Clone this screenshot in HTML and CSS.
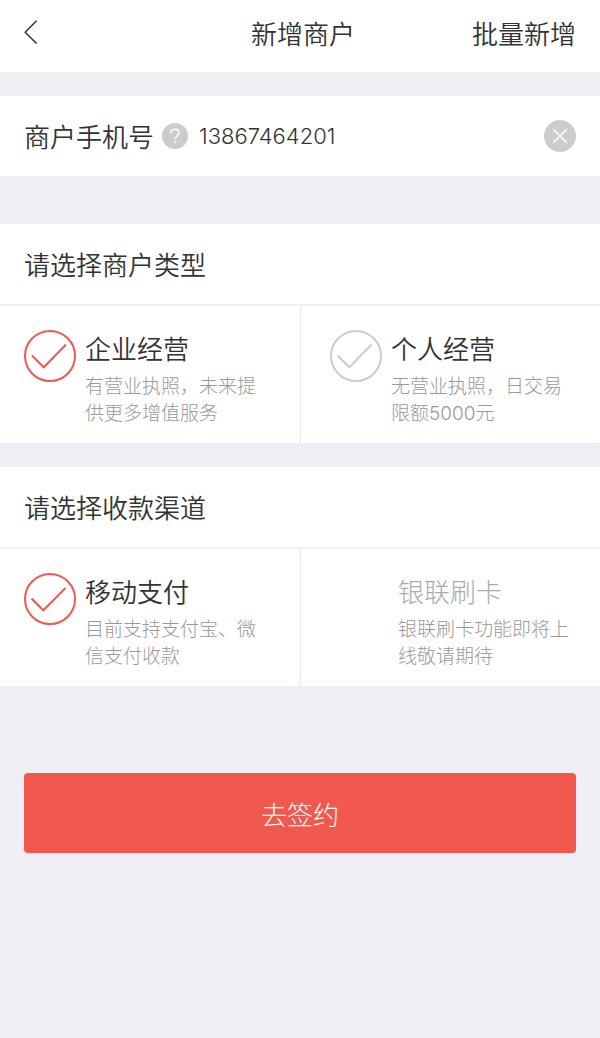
FILE: index.html
```html
<!DOCTYPE html>
<html lang="zh-CN">
<head>
<meta charset="utf-8">
<meta name="viewport" content="width=device-width, initial-scale=1">
<title>新增商户</title>
<link rel="stylesheet" href="styles.css">
</head>
<body>
<header class="topbar">
  <button class="back" type="button" aria-label="返回">
    <svg width="14" height="24" viewBox="0 0 14 24"><path d="M12.5 .8 1.2 12.2 12.5 23.5"/></svg>
  </button>
  <h1 class="topbar-title">新增商户</h1>
  <a class="topbar-link" href="#batch">批量新增</a>
</header>
<form class="form">
  <div class="phone">
    <label class="phone-label" for="phone">商户手机号</label>
    <button class="help" type="button" aria-label="帮助">
      <svg width="26" height="26" viewBox="0 0 26 26"><circle cx="13" cy="13" r="13"/><path d="M8.9 10.2C8.9 7.6 10.5 6.3 12.9 6.3c2.400 0 4 1.400 4 3.500 0 3.200-3.900 3.400-3.900 6.700"/><path d="M13 18.300v1.800"/></svg>
    </button>
    <input class="phone-input" id="phone" type="tel" value="13867464201">
    <button class="clear" type="button" aria-label="清除">
      <svg width="32" height="32" viewBox="0 0 32 32"><circle cx="16" cy="16" r="16"/><path d="M9.300 9.300 22.700 22.700M22.700 9.300 9.300 22.700"/></svg>
    </button>
  </div>

  <section class="group" aria-labelledby="type-title">
    <h2 class="group-title" id="type-title">请选择商户类型</h2>
    <div class="options">
      <label class="option">
        <span class="mark">
          <input class="radio" type="radio" name="type" checked>
          <svg class="tick" width="52" height="52" viewBox="0 0 52 52"><path d="M8 25.500 19.800 37.300 42 14.500"/></svg>
        </span>
        <span class="option-text">
          <span class="option-name">企业经营</span>
          <span class="option-desc">有营业执照，未来提供更多增值服务</span>
        </span>
      </label>
      <label class="option">
        <span class="mark">
          <input class="radio" type="radio" name="type">
          <svg class="tick" width="52" height="52" viewBox="0 0 52 52"><path d="M7.500 25.500 19.300 37.300 41.500 14.500"/></svg>
        </span>
        <span class="option-text">
          <span class="option-name">个人经营</span>
          <span class="option-desc">无营业执照，日交易限额5000元</span>
        </span>
      </label>
    </div>
  </section>

  <section class="group" aria-labelledby="channel-title">
    <h2 class="group-title" id="channel-title">请选择收款渠道</h2>
    <div class="options">
      <label class="option">
        <span class="mark">
          <input class="radio" type="radio" name="channel" checked>
          <svg class="tick" width="52" height="52" viewBox="0 0 52 52"><path d="M7.500 25.500 19.300 37.300 41.500 15"/></svg>
        </span>
        <span class="option-text">
          <span class="option-name">移动支付</span>
          <span class="option-desc">目前支持支付宝、微信支付收款</span>
        </span>
      </label>
      <div class="option option-off">
        <span class="option-text">
          <span class="option-name">银联刷卡</span>
          <span class="option-desc">银联刷卡功能即将上线敬请期待</span>
        </span>
      </div>
    </div>
  </section>

  <button class="submit" type="submit">去签约</button>
</form>
</body>
</html>
```
FILE: styles.css
```css
* {
  box-sizing: border-box;
}

body {
  margin: 0;
  min-height: 100vh;
  background: #efeef4;
  color: #333;
  font-family: "Noto Sans CJK SC", sans-serif;
  font-size: 26px;
  font-weight: 350;
}

button,
input {
  margin: 0;
  padding: 0;
  border: 0;
  background: none;
  color: inherit;
  font: inherit;
}

svg {
  display: block;
  fill: none;
}

.topbar {
  display: grid;
  grid-template-columns: 1fr auto 1fr;
  align-items: center;
  min-height: 72px;
  padding: 0 24px 8px;
  background: #fff;
}

.back {
  justify-self: start;
}

.back svg {
  stroke: #333;
  stroke-width: 1.5;
}

.topbar-title,
.group-title {
  margin: 0;
  font-size: 26px;
  font-weight: 350;
}

.topbar-title {
  padding-left: 6px;
}

.topbar-link {
  justify-self: end;
  color: inherit;
  text-decoration: none;
}

.form {
  display: flex;
  flex-direction: column;
  gap: 24px;
  padding-top: 24px;
}

.phone {
  display: flex;
  align-items: center;
  min-height: 80px;
  margin-bottom: 24px;
  padding: 0 24px;
  background: #fff;
}

.phone-label {
  line-height: 36px;
}

.help {
  margin: 0 11px 0 8px;
}

.help circle,
.clear circle {
  fill: #ccc;
}

.help path,
.clear path {
  stroke: #fff;
  stroke-width: 1.5;
}

.phone-input {
  flex: 1;
  min-width: 0;
  font-family: Inter, sans-serif;
  font-size: 22px;
}

.group {
  background: #fff;
}

.group-title {
  padding: 0 24px;
  line-height: 80px;
}

.options {
  display: grid;
  grid-template-columns: 1fr 1fr;
  border-top: 2px solid #f0eff4;
}

.option {
  display: flex;
  gap: 9px;
  padding: 24px 28px 16px 24px;
}

.option + .option {
  padding-left: 29px;
  border-left: 1px solid #eae9ef;
}

.option + .option-off {
  padding-left: 97px;
  color: #aaa;
}

.option-off .option-name {
  font-weight: 300;
}

.mark {
  display: grid;
  flex: none;
  align-self: start;
}

.radio,
.tick {
  grid-area: 1 / 1;
}

.radio {
  width: 52px;
  height: 52px;
  border: 2px solid #ccc;
  border-radius: 50%;
  appearance: none;
}

.radio:checked {
  border-color: #f1584e;
}

.tick {
  stroke: #ccc;
  stroke-width: 2;
  pointer-events: none;
}

.radio:checked + .tick {
  stroke: #f1584e;
}

.option-text {
  display: flex;
  flex-direction: column;
  gap: 7px;
}

.option-name {
  line-height: 36px;
}

.option-desc {
  color: #999;
  font-family: Inter, "Noto Sans CJK SC", sans-serif;
  font-size: 19px;
  font-weight: 300;
  line-height: 27px;
}

.submit {
  height: 80px;
  margin: 63px 24px 24px;
  border-radius: 4px;
  background: #f1584e;
  color: #fff;
  font-weight: 300;
}
```
